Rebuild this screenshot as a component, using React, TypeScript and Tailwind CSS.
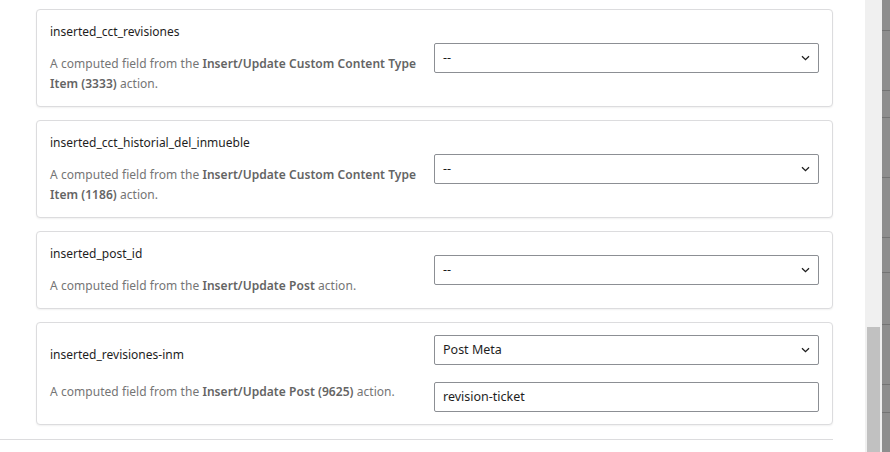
import React from "react";

type Field = {
  name: string;
  action: string;
  rest: string;
  kind: "select" | "meta";
};

const fields: Field[] = [
  { name: "inserted_cct_revisiones", action: "Insert/Update Custom Content Type Item (3333)", rest: " action.", kind: "select" },
  { name: "inserted_cct_historial_del_inmueble", action: "Insert/Update Custom Content Type Item (1186)", rest: " action.", kind: "select" },
  { name: "inserted_post_id", action: "Insert/Update Post", rest: " action.", kind: "select" },
  { name: "inserted_revisiones-inm", action: "Insert/Update Post (9625)", rest: " action.", kind: "meta" },
];

function Chevron() {
  return (
    <svg width="9" height="6" viewBox="0 0 9 6" className="shrink-0">
      <path d="M1 1.2l3.5 3.5 3.5-3.5" fill="none" stroke="#1e1e1e" strokeWidth="1.3" />
    </svg>
  );
}

function FakeSelect({ value }: { value: string }) {
  return (
    <div className="flex h-[30px] items-center justify-between rounded-[2px] border border-[#8c8f94] bg-white pl-[8px] pr-[8px] text-[12.5px] text-[#1e1e1e]">
      <span>{value}</span>
      <Chevron />
    </div>
  );
}

function FieldCard({ field }: { field: Field }) {
  const meta = field.kind === "meta";
  return (
    <div className="flex items-center gap-[15px] rounded-[4px] border border-[#dcdcde] bg-white px-[13px] py-[12px] shadow-[0_1px_2px_rgba(0,0,0,0.06)]">
      <div className={`flex flex-1 flex-col ${meta ? "gap-[17px]" : "gap-[12px]"}`}>
        <div className="text-[12px] leading-[20px] text-[#1e1e1e]">{field.name}</div>
        <div className="text-[12px] leading-[20px] tracking-[0.05px] text-[#757575]">
          A computed field from the <span className="font-semibold text-[#646464]">{field.action}</span>
          {field.rest}
        </div>
      </div>
      <div className="flex w-[385px] flex-col gap-[17px]">
        {meta ? (
          <>
            <FakeSelect value="Post Meta" />
            <div className="flex h-[30px] items-center rounded-[2px] border border-[#8c8f94] bg-white px-[8px] text-[12.5px] text-[#1e1e1e]">
              revision-ticket
            </div>
          </>
        ) : (
          <FakeSelect value="--" />
        )}
      </div>
    </div>
  );
}

const stripLines = [30, 90, 117, 177, 237, 272, 324, 384, 412];

export default function App() {
  return (
    <div
      className="flex h-[452px] w-[890px] overflow-hidden bg-white"
      style={{ fontFamily: '"Noto Sans", "Open Sans", sans-serif' }}
    >
      <div className="flex w-[865px] flex-col">
        <div className="flex w-[833px] flex-col gap-[13px] border-b border-[#dcdcde] pb-[14px] pl-[36px] pt-[9px]">
          {fields.map((f) => (
            <FieldCard key={f.name} field={f} />
          ))}
        </div>
      </div>
      {/* scrollbar */}
      <div className="flex w-[17px] flex-col bg-[#f0f0f0] pt-[327px]">
        <div className="mx-[2px] flex-1 bg-[#c1c1c1]" />
      </div>
      {/* backdrop strip */}
      <div className="relative flex-1 bg-[#8e8e8e]">
        {stripLines.map((y) => (
          <div key={y} className="absolute left-0 right-0 h-px bg-[#747474]" style={{ top: y }} />
        ))}
      </div>
    </div>
  );
}
